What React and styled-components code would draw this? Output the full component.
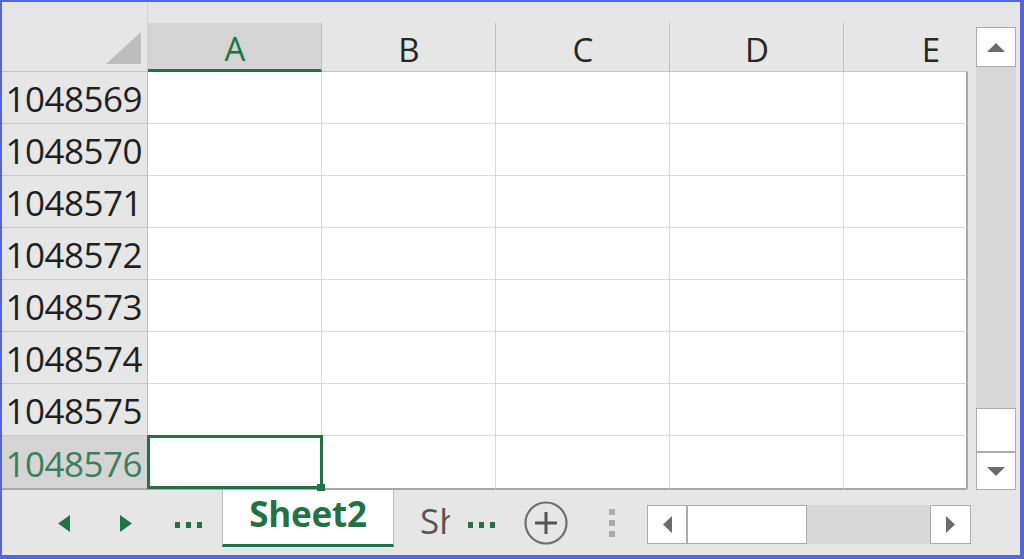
import React from "react";
import styled, { createGlobalStyle } from "styled-components";

const GREEN = "#217346";

const GlobalStyle = createGlobalStyle`
  html, body { margin: 0; padding: 0; background: #ffffff; }
  body { font-family: "Open Sans", "Noto Sans", sans-serif; }
`;

const Frame = styled.div`
  width: 1024px;
  height: 559px;
  box-sizing: border-box;
  border-style: solid;
  border-color: #5566dd;
  border-width: 2px 4px 4px 2px;
  background: #e6e6e6;
  display: grid;
  grid-template-columns: 966px 52px;
  grid-template-rows: 488px 65px;
  overflow: hidden;
  font-family: "Open Sans", "Noto Sans", sans-serif;
`;

const Sheet = styled.div`
  display: grid;
  grid-template-columns: 146px repeat(4, 174px) 124px;
  grid-template-rows: 70px repeat(7, 52px) 54px;
`;

const Corner = styled.div`
  display: flex;
  align-items: flex-end;
  justify-content: flex-end;
  padding: 0 6px 7px 0;
  box-sizing: border-box;
  border-bottom: 1px solid #c4c4c4;
  border-right: 1px solid #d0d0d0;
`;

const ColHeader = styled.div`
  align-self: end;
  height: 49px;
  box-sizing: border-box;
  display: flex;
  align-items: center;
  justify-content: flex-start;
  overflow: hidden;
  font-size: 33px;
  color: ${(p) => (p.$selected ? GREEN : "#262626")};
  background: ${(p) => (p.$selected ? "#d4d4d4" : "transparent")};
  border-right: ${(p) => (p.$last ? "none" : "1px solid #bdbdbd")};
  border-bottom: ${(p) =>
    p.$selected ? `3px solid ${GREEN}` : "1px solid #c4c4c4"};
`;

const ColLabel = styled.span`
  flex: none;
  width: 174px;
  text-align: center;
  line-height: 1;
  padding-top: 5px;
`;

const RowHeader = styled.div`
  display: flex;
  align-items: center;
  justify-content: flex-end;
  padding: 2px 5px 0 0;
  box-sizing: border-box;
  font-size: 35px;
  letter-spacing: -0.5px;
  color: ${(p) => (p.$selected ? "#3a7f5c" : "#1f1f1f")};
  background: ${(p) => (p.$selected ? "#d4d4d4" : "#e6e6e6")};
  border-right: 1px solid #bdbdbd;
  border-bottom: ${(p) => (p.$last ? "2px solid #a9a9a9" : "1px solid #c9c9c9")};
`;

const Cell = styled.div`
  position: relative;
  background: #ffffff;
  box-sizing: border-box;
  border-right: ${(p) => (p.$lastCol ? "2px solid #a6a6a6" : "1px solid #dadada")};
  border-bottom: ${(p) => (p.$lastRow ? "2px solid #a6a6a6" : "1px solid #dadada")};
  border-bottom-right-radius: ${(p) => (p.$lastCol && p.$lastRow ? "3px" : "0")};
`;

const SelectionBox = styled.div`
  position: absolute;
  top: -1px;
  left: -1px;
  right: -2px;
  bottom: -1px;
  border: 3px solid ${GREEN};
  pointer-events: none;
  z-index: 2;
`;

const FillHandle = styled.div`
  position: absolute;
  right: -4px;
  bottom: -3px;
  width: 8px;
  height: 7px;
  background: ${GREEN};
  z-index: 3;
`;

const VScroll = styled.div`
  display: flex;
  flex-direction: column;
  padding: 25px 4px 0 8px;
`;

const ScrollButton = styled.div`
  flex: none;
  width: ${(p) => p.$w || 40}px;
  height: ${(p) => p.$h || 40}px;
  box-sizing: border-box;
  background: #ffffff;
  border: 1px solid #ababab;
  display: flex;
  align-items: center;
  justify-content: center;
`;

const VTrack = styled.div`
  flex: 1;
  background: #d8d8d8;
  display: flex;
  flex-direction: column;
  justify-content: flex-end;
`;

const Thumb = styled.div`
  flex: none;
  box-sizing: border-box;
  background: #ffffff;
  border: 1px solid #ababab;
  width: ${(p) => p.$w}px;
  height: ${(p) => p.$h}px;
`;

const BottomBar = styled.div`
  grid-column: 1 / -1;
  display: flex;
  align-items: center;
  padding-top: 1px;
  box-sizing: border-box;
`;

const Slot = styled.div`
  flex: none;
  margin-left: ${(p) => p.$ml}px;
  display: flex;
  align-items: center;
`;

const Dots = styled.div`
  flex: none;
  margin-left: ${(p) => p.$ml}px;
  display: flex;
  gap: 6px;
  padding-top: 4px;
`;

const Dot = styled.span`
  width: 5px;
  height: 6px;
  background: ${GREEN};
`;

const Tab = styled.div`
  flex: none;
  align-self: flex-start;
  margin-left: ${(p) => p.$ml}px;
  width: 172px;
  height: 57px;
  box-sizing: border-box;
  margin-top: -1px;
  background: #ffffff;
  border-left: 1px solid #bdbdbd;
  border-right: 1px solid #bdbdbd;
  border-bottom: 3px solid ${GREEN};
  display: flex;
  align-items: center;
  justify-content: center;
  padding-bottom: 7px;
  font-size: 35px;
  font-weight: 700;
  color: ${GREEN};
  letter-spacing: -0.2px;
`;

const PeekTab = styled.div`
  flex: none;
  margin-left: ${(p) => p.$ml}px;
  width: 30px;
  overflow: hidden;
  white-space: nowrap;
  font-size: 35px;
  color: #555555;
  padding-bottom: 6px;
`;

const Splitter = styled.div`
  flex: none;
  margin-left: ${(p) => p.$ml}px;
  display: flex;
  flex-direction: column;
  gap: 5px;
`;

const SplitDot = styled.span`
  width: 6px;
  height: 6px;
  background: #ababab;
`;

const HScroll = styled.div`
  flex: none;
  margin-left: ${(p) => p.$ml}px;
  width: 324px;
  height: 39px;
  display: flex;
  margin-top: 3px;
`;

const HTrack = styled.div`
  flex: 1;
  background: #d8d8d8;
`;

const Triangle = ({ dir, w, h, color }) => {
  const pts = {
    up: `0,${h} ${w / 2},0 ${w},${h}`,
    down: `0,0 ${w},0 ${w / 2},${h}`,
    left: `${w},0 ${w},${h} 0,${h / 2}`,
    right: `0,0 ${w},${h / 2} 0,${h}`,
  }[dir];
  return (
    <svg width={w} height={h} viewBox={`0 0 ${w} ${h}`}>
      <polygon points={pts} fill={color} />
    </svg>
  );
};

const CornerTriangle = () => (
  <svg width="35" height="32" viewBox="0 0 35 32">
    <polygon points="35,0 35,32 0,32" fill="#bdbdbd" />
  </svg>
);

const PlusCircle = () => (
  <svg width="44" height="44" viewBox="0 0 44 44">
    <circle cx="22" cy="22" r="20.5" fill="none" stroke="#6e6e6e" strokeWidth="2.2" />
    <line x1="11" y1="22" x2="33" y2="22" stroke="#555" strokeWidth="3" />
    <line x1="22" y1="11" x2="22" y2="33" stroke="#555" strokeWidth="3" />
  </svg>
);

const columns = ["A", "B", "C", "D", "E"];
const rows = [1048569, 1048570, 1048571, 1048572, 1048573, 1048574, 1048575, 1048576];

export default function App() {
  return (
    <>
      <GlobalStyle />
      <Frame>
        <Sheet>
          <Corner>
            <CornerTriangle />
          </Corner>
          {columns.map((c, i) => (
            <ColHeader key={c} $selected={i === 0} $last={i === columns.length - 1}>
              <ColLabel>{c}</ColLabel>
            </ColHeader>
          ))}
          {rows.map((r, ri) => {
            const lastRow = ri === rows.length - 1;
            return (
              <React.Fragment key={r}>
                <RowHeader $selected={lastRow} $last={lastRow}>
                  {r}
                </RowHeader>
                {columns.map((c, ci) => (
                  <Cell key={c} $lastCol={ci === columns.length - 1} $lastRow={lastRow}>
                    {lastRow && ci === 0 && (
                      <>
                        <SelectionBox />
                        <FillHandle />
                      </>
                    )}
                  </Cell>
                ))}
              </React.Fragment>
            );
          })}
        </Sheet>

        <VScroll>
          <ScrollButton>
            <Triangle dir="up" w={18} h={9} color="#6b6b6b" />
          </ScrollButton>
          <VTrack>
            <Thumb $w={40} $h={44} />
          </VTrack>
          <ScrollButton $h={38}>
            <Triangle dir="down" w={18} h={9} color="#6b6b6b" />
          </ScrollButton>
        </VScroll>

        <BottomBar>
          <Slot $ml={56}>
            <Triangle dir="left" w={12} h={17} color={GREEN} />
          </Slot>
          <Slot $ml={50}>
            <Triangle dir="right" w={12} h={17} color={GREEN} />
          </Slot>
          <Dots $ml={43}>
            <Dot />
            <Dot />
            <Dot />
          </Dots>
          <Tab $ml={20}>Sheet2</Tab>
          <PeekTab $ml={26}>Sheet3</PeekTab>
          <Dots $ml={18}>
            <Dot />
            <Dot />
            <Dot />
          </Dots>
          <Slot $ml={29}>
            <PlusCircle />
          </Slot>
          <Splitter $ml={41}>
            <SplitDot />
            <SplitDot />
            <SplitDot />
          </Splitter>
          <HScroll $ml={32}>
            <ScrollButton $w={40} $h={39}>
              <Triangle dir="left" w={9} h={17} color="#6b6b6b" />
            </ScrollButton>
            <Thumb $w={120} $h={39} />
            <HTrack />
            <ScrollButton $w={41} $h={39}>
              <Triangle dir="right" w={9} h={17} color="#6b6b6b" />
            </ScrollButton>
          </HScroll>
        </BottomBar>
      </Frame>
    </>
  );
}
